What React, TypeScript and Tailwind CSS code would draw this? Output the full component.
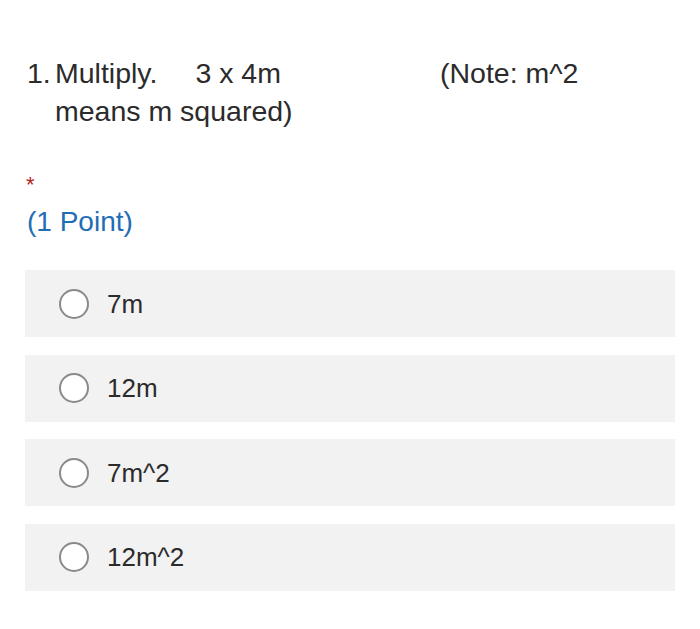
import React from 'react';

const options = ['7m', '12m', '7m^2', '12m^2'];

const Option: React.FC<{ label: string }> = ({ label }) => (
  <label className="flex h-[67px] items-center bg-[#f2f2f2] pl-[34px]">
    <span className="h-[30px] w-[30px] shrink-0 rounded-full border-2 border-[#8a8a8a] bg-white" />
    <span className="ml-[18px] text-[26px] leading-none text-[#2b2b2b]">{label}</span>
  </label>
);

const App: React.FC = () => {
  return (
    <div
      className="min-h-screen bg-white px-[25px] pt-[54px]"
      style={{ fontFamily: '"Liberation Sans", Arial, sans-serif' }}
    >
      {/* question title */}
      <div className="flex pl-[2px] text-[28.5px] leading-[38px] text-[#2b2b2b]">
        <span className="w-[28px] shrink-0">1.</span>
        <div>
          <div className="flex">
            <span>Multiply.</span>
            <span className="ml-[38px]">3 x 4m</span>
            <span className="ml-[159px]">(Note: m^2</span>
          </div>
          <div>means m squared)</div>
        </div>
      </div>

      <div className="mt-[42px] pl-[1px] text-[22px] leading-[26px] text-[#b3261e]">*</div>

      <div className="mt-[5px] pl-[2px] text-[28px] leading-[38px] text-[#1f6db5]">(1 Point)</div>

      <div className="mt-[29px] flex flex-col gap-[17.5px]">
        {options.map((o) => (
          <Option key={o} label={o} />
        ))}
      </div>
    </div>
  );
};

export default App;
